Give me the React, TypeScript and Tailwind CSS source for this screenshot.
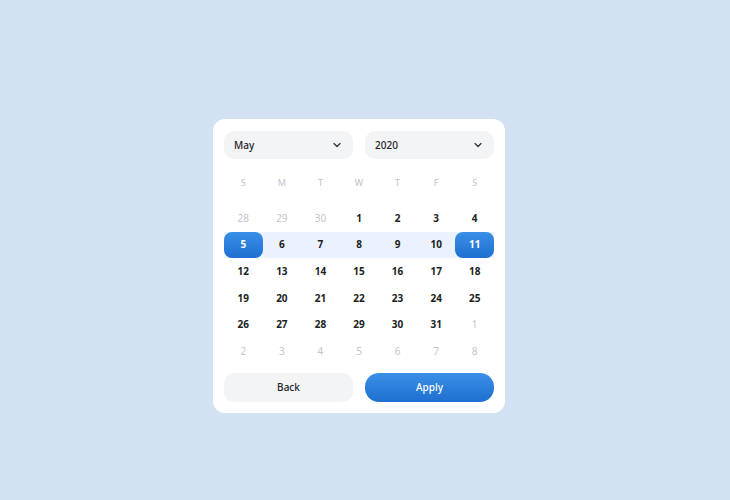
import { ChevronDown } from "lucide-react";

const font = { fontFamily: '"Noto Sans", "Open Sans", sans-serif' };

type Day = { n: number; muted?: boolean };

const weeks: Day[][] = [
  [{ n: 28, muted: true }, { n: 29, muted: true }, { n: 30, muted: true }, { n: 1 }, { n: 2 }, { n: 3 }, { n: 4 }],
  [{ n: 5 }, { n: 6 }, { n: 7 }, { n: 8 }, { n: 9 }, { n: 10 }, { n: 11 }],
  [{ n: 12 }, { n: 13 }, { n: 14 }, { n: 15 }, { n: 16 }, { n: 17 }, { n: 18 }],
  [{ n: 19 }, { n: 20 }, { n: 21 }, { n: 22 }, { n: 23 }, { n: 24 }, { n: 25 }],
  [{ n: 26 }, { n: 27 }, { n: 28 }, { n: 29 }, { n: 30 }, { n: 31 }, { n: 1, muted: true }],
  [{ n: 2, muted: true }, { n: 3, muted: true }, { n: 4, muted: true }, { n: 5, muted: true }, { n: 6, muted: true }, { n: 7, muted: true }, { n: 8, muted: true }],
];

function Select({ label }: { label: string }) {
  return (
    <div className="flex h-[28px] flex-1 items-center justify-between rounded-[10px] bg-[#f3f4f6] pl-[10px] pr-[10px]">
      <span className="text-[10px] font-medium text-[#1f2329]">{label}</span>
      <ChevronDown size={12} strokeWidth={2.4} className="text-[#2a2e33]" />
    </div>
  );
}

export default function App() {
  return (
    <div className="h-[500px] w-[730px] bg-[#d3e2f2] pl-[213px] pt-[119px]" style={font}>
      <div className="w-[292px] rounded-[12px] bg-white px-[11px] pb-[11px] pt-[12px]">
        <div className="flex gap-[12px]">
          <Select label="May" />
          <Select label="2020" />
        </div>

        <div className="mt-[11px] grid h-[26px] grid-cols-7 items-center">
          {["S", "M", "T", "W", "T", "F", "S"].map((d, i) => (
            <div key={i} className="text-center text-[9px] text-[#c0c3c7]">
              {d}
            </div>
          ))}
        </div>

        <div className="mt-[9px] flex flex-col">
          {weeks.map((week, wi) => {
            const selectedRow = wi === 1;
            return (
              <div
                key={wi}
                className={`grid h-[26.67px] grid-cols-7 items-center ${selectedRow ? "bg-[#ecf2fd]" : ""}`}
              >
                {week.map((d, di) => {
                  const edge = selectedRow && (di === 0 || di === 6);
                  if (edge) {
                    return (
                      <div
                        key={di}
                        className="flex h-full items-center justify-center rounded-[8px] bg-gradient-to-b from-[#3a8fe6] to-[#1e6fd1] text-[10px] font-bold text-white"
                      >
                        {d.n}
                      </div>
                    );
                  }
                  return (
                    <div
                      key={di}
                      className={`text-center text-[10px] ${d.muted ? "font-normal text-[#c2c5c9]" : "font-bold text-[#1b1e22]"}`}
                    >
                      {d.n}
                    </div>
                  );
                })}
              </div>
            );
          })}
        </div>

        <div className="mt-[8px] flex gap-[12px]">
          <button className="h-[29px] flex-1 rounded-[10px] bg-[#f3f4f6] text-[10px] font-medium text-[#1f2329]">
            Back
          </button>
          <button className="h-[29px] flex-1 rounded-[14px] bg-gradient-to-b from-[#3a8fe6] to-[#1e6fd1] text-[10px] font-medium text-white">
            Apply
          </button>
        </div>
      </div>
    </div>
  );
}
